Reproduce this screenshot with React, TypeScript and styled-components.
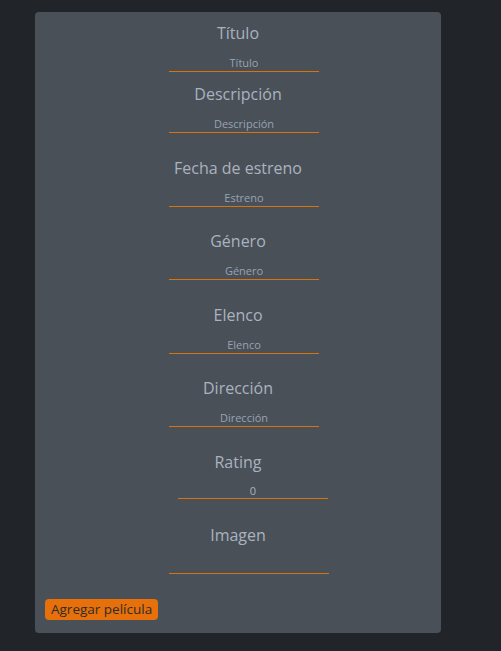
import styled, { createGlobalStyle } from 'styled-components'

const GlobalStyle = createGlobalStyle`
  html, body {
    margin: 0;
    padding: 0;
    background: #212428;
    font-family: 'Open Sans', 'Liberation Sans', sans-serif;
  }
`

type Field = {
  label: string
  placeholder?: string
  value?: string
  offset: number
  width: number
  height?: number
  gap?: number
}

const fields: Field[] = [
  { label: 'Título', placeholder: 'Título', offset: 12, width: 150, gap: 0 },
  { label: 'Descripción', placeholder: 'Descripción', offset: 12, width: 150, gap: 10 },
  { label: 'Fecha de estreno', placeholder: 'Estreno', offset: 12, width: 150 },
  { label: 'Género', placeholder: 'Género', offset: 12, width: 150 },
  { label: 'Elenco', placeholder: 'Elenco', offset: 12, width: 150 },
  { label: 'Dirección', placeholder: 'Dirección', offset: 12, width: 150 },
  { label: 'Rating', value: '0', offset: 30, width: 150, height: 15 },
  { label: 'Imagen', offset: 22, width: 160, gap: 24.5 },
]

const App = () => {
  return (
    <SPage>
      <GlobalStyle />
      <SCard>
        {fields.map((f) => (
          <SGroup key={f.label} $gap={f.gap ?? 22.5}>
            <SLabel>{f.label}</SLabel>
            <SInput
              $offset={f.offset}
              $width={f.width}
              $height={f.height ?? 17}
              placeholder={f.placeholder}
              defaultValue={f.value}
              readOnly
            />
          </SGroup>
        ))}
        <SButton>Agregar película</SButton>
      </SCard>
    </SPage>
  )
}

const SPage = styled.div`
  padding: 12px 0 18px 35px;
`

const SCard = styled.form`
  box-sizing: border-box;
  width: 406px;
  height: 621px;
  background: #4a5058;
  border-radius: 4px;
  padding: 9px 10px 0;
  display: flex;
  flex-direction: column;
`

const SGroup = styled.div<{ $gap: number }>`
  display: flex;
  flex-direction: column;
  align-items: center;
  margin-top: ${(p) => p.$gap}px;
`

const SLabel = styled.label`
  font-size: 16px;
  line-height: 24px;
  color: #a9b3bf;
`

const SInput = styled.input<{ $offset: number; $width: number; $height: number }>`
  box-sizing: content-box;
  width: ${(p) => p.$width}px;
  height: ${(p) => p.$height}px;
  margin: 9px 0 0 ${(p) => p.$offset}px;
  padding: 0;
  border: none;
  border-bottom: 1px solid #d9730f;
  background: transparent;
  outline: none;
  text-align: center;
  font-family: inherit;
  font-size: 11px;
  color: #a9b3bf;

  &::placeholder {
    color: #97a3b2;
  }
`

const SButton = styled.button`
  align-self: flex-start;
  margin-top: 25px;
  height: 21px;
  padding: 0 6px;
  border: none;
  border-radius: 4px;
  background: #e8700a;
  color: #2b2d2a;
  font-family: inherit;
  font-size: 13.5px;
  line-height: 21px;
`

export default App
